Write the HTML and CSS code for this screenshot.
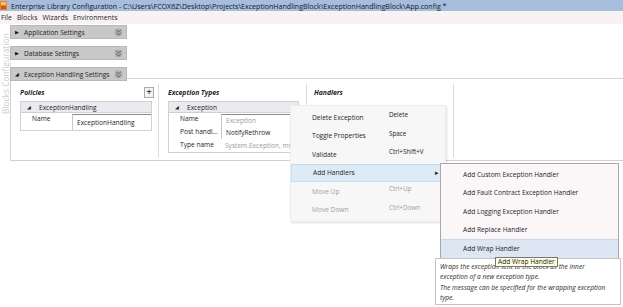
FILE: index.html
```html
<!DOCTYPE html>
<html lang="en">
<head>
    <meta charset="UTF-8">
    <title>Enterprise Library Configuration</title>
    <link rel="stylesheet" href="styles.css">
</head>
<body>

<div class="window">
    <div class="titlebar">
        <svg class="app-icon" width="7" height="9" viewBox="0 0 7 9">
            <rect x="0" y="0" width="7" height="9" fill="#e8862a"/>
            <rect x="1" y="1" width="5" height="3" fill="#f6c06a"/>
            <rect x="1" y="5" width="5" height="3" fill="#c9561c"/>
        </svg>
        <span class="title">Enterprise Library Configuration - C:\Users\FCOX6Z\Desktop\Projects\ExceptionHandlingBlock\ExceptionHandlingBlock\App.config *</span>
    </div>

    <div class="menubar">
        <span>File</span>
        <span>Blocks</span>
        <span>Wizards</span>
        <span>Environments</span>
    </div>

    <div class="workspace">
        <div class="sidebar"><span>Blocks Configuration</span></div>

        <div class="blocks">
            <div class="block-header">
                <span class="tri">&#9654;</span>
                <span class="block-name">Application Settings</span>
                <svg class="chev" width="9" height="9" viewBox="0 0 9 9">
                    <circle cx="4.5" cy="4.5" r="4.2" fill="#b4b4b4"/>
                    <path d="M2 1.8 L4.5 4 L7 1.8 M2 4.8 L4.5 7 L7 4.8" fill="none" stroke="#7a7a7a" stroke-width="1.2"/>
                </svg>
            </div>
            <div class="block-header">
                <span class="tri">&#9654;</span>
                <span class="block-name">Database Settings</span>
                <svg class="chev" width="9" height="9" viewBox="0 0 9 9">
                    <circle cx="4.5" cy="4.5" r="4.2" fill="#b4b4b4"/>
                    <path d="M2 1.8 L4.5 4 L7 1.8 M2 4.8 L4.5 7 L7 4.8" fill="none" stroke="#7a7a7a" stroke-width="1.2"/>
                </svg>
            </div>
            <div class="block-header open">
                <span class="tri">&#9698;</span>
                <span class="block-name">Exception Handling Settings</span>
                <svg class="chev" width="9" height="9" viewBox="0 0 9 9">
                    <circle cx="4.5" cy="4.5" r="4.2" fill="#b4b4b4"/>
                    <path d="M2 1.8 L4.5 4 L7 1.8 M2 4.8 L4.5 7 L7 4.8" fill="none" stroke="#7a7a7a" stroke-width="1.2"/>
                </svg>
            </div>

            <div class="block-panel">
                <div class="column policies">
                    <div class="column-head">
                        <span class="column-title">Policies</span>
                        <span class="add-btn">+</span>
                    </div>
                    <div class="element">
                        <div class="element-head"><span class="tri-small">&#9698;</span>ExceptionHandling</div>
                        <div class="prop">
                            <span class="prop-label">Name</span>
                            <span class="prop-value edit">ExceptionHandling</span>
                        </div>
                    </div>
                </div>

                <div class="column types">
                    <div class="column-head">
                        <span class="column-title">Exception Types</span>
                    </div>
                    <div class="element">
                        <div class="element-head"><span class="tri-small">&#9698;</span>Exception</div>
                        <div class="prop">
                            <span class="prop-label">Name</span>
                            <span class="prop-value edit muted">Exception</span>
                        </div>
                        <div class="prop">
                            <span class="prop-label">Post handl...</span>
                            <span class="prop-value combo">NotifyRethrow</span>
                        </div>
                        <div class="prop">
                            <span class="prop-label">Type name</span>
                            <span class="prop-value muted">System.Exception, ms</span>
                        </div>
                    </div>
                </div>

                <div class="column handlers">
                    <div class="column-head">
                        <span class="column-title">Handlers</span>
                    </div>
                </div>
            </div>
        </div>
    </div>

    <div class="context-menu">
        <div class="menu-item"><span class="label">Delete Exception</span><span class="key">Delete</span></div>
        <div class="menu-item"><span class="label">Toggle Properties</span><span class="key">Space</span></div>
        <div class="menu-item"><span class="label">Validate</span><span class="key">Ctrl+Shift+V</span></div>
        <div class="menu-item active"><span class="label">Add Handlers</span><span class="arrow">&#9656;</span></div>
        <div class="menu-item disabled"><span class="label">Move Up</span><span class="key">Ctrl+Up</span></div>
        <div class="menu-item disabled"><span class="label">Move Down</span><span class="key">Ctrl+Down</span></div>
    </div>

    <div class="submenu">
        <div class="sub-item">Add Custom Exception Handler</div>
        <div class="sub-item">Add Fault Contract Exception Handler</div>
        <div class="sub-item">Add Logging Exception Handler</div>
        <div class="sub-item">Add Replace Handler</div>
        <div class="sub-item active">Add Wrap Handler</div>
    </div>

    <div class="description">
        Wraps the exception sent to the block as the inner<br>
        exception of a new exception type.<br>
        The message can be specified for the wrapping exception<br>
        type.
    </div>

    <div class="tooltip">Add Wrap Handler</div>
</div>

</body>
</html>
```

FILE: styles.css
```css
body {
    margin: 0;
    padding: 0;
    font-family: "Open Sans", "Noto Sans", sans-serif;
    font-size: 6.6px;
    color: #1e1e1e;
    background-color: white;
}
.window {
    position: relative;
    width: 623px;
    height: 307px;
    overflow: hidden;
}

/* title and menu */
.titlebar {
    height: 11px;
    background-color: #a6bddb;
    display: flex;
    align-items: center;
    gap: 4px;
    font-size: 7.1px;
    color: #14182a;
    white-space: nowrap;
}
.app-icon {
    flex: none;
}
.menubar {
    height: 13px;
    background-color: #f8f2f5;
    display: flex;
    align-items: center;
    gap: 5px;
    padding-left: 1px;
    font-size: 6.9px;
}

/* left strip + blocks */
.workspace {
    display: flex;
}
.sidebar {
    width: 10px;
    flex: none;
    display: flex;
    justify-content: center;
    padding-top: 2px;
}
.sidebar span {
    writing-mode: vertical-rl;
    transform: rotate(180deg);
    font-size: 8.4px;
    color: #cdcdcd;
    white-space: nowrap;
    height: 88px;
}
.blocks {
    flex: 1;
    padding-top: 1px;
}
.block-header {
    width: 117px;
    height: 14px;
    box-sizing: border-box;
    background-color: #c8c8c8;
    border: 1px solid #b8b8b8;
    display: flex;
    align-items: center;
    padding: 0 3px 0 4px;
    margin-bottom: 7px;
    white-space: nowrap;
}
.block-header.open {
    margin-bottom: 0;
}
.tri {
    font-size: 5px;
    width: 9px;
    color: #111;
}
.block-name {
    flex: 1;
    font-size: 6.6px;
}
.chev {
    flex: none;
}

/* expanded block */
.block-panel {
    height: 80px;
    box-sizing: border-box;
    border-left: 1px solid #d0d0d0;
    border-bottom: 1px solid #d0d0d0;
    display: flex;
    position: relative;
}
.block-panel::before {
    content: "";
    position: absolute;
    left: 116px;
    right: 0;
    top: -3px;
    border-top: 1px solid #d4d4d4;
}
.column {
    box-sizing: border-box;
    width: 148px;
    border-right: 1px solid #dcdcdc;
    margin: 3px 0 2px;
    padding: 0 7px 0 9px;
}
.column-head {
    height: 15px;
    display: flex;
    align-items: center;
    justify-content: space-between;
    margin-top: 1px;
}
.column-title {
    font-weight: bold;
    font-style: italic;
    font-size: 6.8px;
}
.add-btn {
    width: 8px;
    height: 9px;
    border: 1px solid #aaa;
    background-color: #f2f2f2;
    font-size: 9px;
    line-height: 8px;
    text-align: center;
    font-weight: bold;
    color: #444;
    margin-right: -3px;
}
.element {
    margin-top: 1px;
    border: 1px solid #cfcfd6;
    width: 132px;
    box-sizing: border-box;
}
.element-head {
    height: 10px;
    background-color: #ebebef;
    border-bottom: 1px solid #cfcfd6;
    display: flex;
    align-items: center;
    padding-left: 6px;
}
.tri-small {
    font-size: 5px;
    width: 12px;
}
.prop {
    display: flex;
    height: 13px;
}
.policies .prop {
    height: 17px;
}
.prop-label {
    width: 40px;
    padding-left: 11px;
    padding-top: 1px;
    flex: none;
    box-sizing: border-box;
}
.policies .prop-label {
    width: 51px;
}
.types .prop-label {
    width: 52px;
}
.prop-value {
    flex: 1;
    padding-left: 4px;
    display: flex;
    align-items: center;
    white-space: nowrap;
    overflow: hidden;
}
.prop-value.edit {
    border-top: 1px solid #8a8a8a;
    border-left: 1px solid #c8c8c8;
    margin-top: 1px;
}
.prop-value.combo {
    border-left: 1px solid #c8c8c8;
    background-color: white;
}
.muted {
    color: #9a9a9a;
}
.types .element {
    width: 131px;
}
.handlers {
    width: 147px;
    padding-left: 7px;
}

/* context menu */
.context-menu {
    position: absolute;
    left: 290px;
    top: 105px;
    width: 156px;
    box-sizing: border-box;
    padding: 2px 0;
    background-color: #f7f7f8;
    border: 1px solid #ececec;
    box-shadow: 1px 1px 2px rgba(0, 0, 0, 0.12);
}
.menu-item {
    height: 18.5px;
    display: flex;
    align-items: center;
    padding-left: 21px;
    box-sizing: border-box;
}
.menu-item .label {
    width: 77px;
}
.menu-item .key {
    padding-bottom: 5px;
    font-size: 6.3px;
}
.menu-item .arrow {
    margin-left: 45px;
    font-size: 7px;
}
.menu-item.active {
    background-color: #ddebf7;
    border: 1px solid #c5def2;
}
.menu-item.disabled {
    color: #a0a0a0;
}

/* submenu */
.submenu {
    position: absolute;
    left: 440px;
    top: 163px;
    width: 179px;
    box-sizing: border-box;
    background-color: #fbf7f9;
    border: 1px solid #a8a8a8;
    padding: 1px 0 4px;
}
.sub-item {
    height: 18.5px;
    display: flex;
    align-items: center;
    padding-left: 22px;
}
.sub-item.active {
    background-color: #dce7f3;
    border-top: 1px solid #c9d9ea;
    border-bottom: 1px solid #c9d9ea;
    height: 17.5px;
}

.description {
    position: absolute;
    left: 435px;
    top: 258px;
    width: 186px;
    height: 47px;
    box-sizing: border-box;
    border: 1px solid #c4c4c4;
    background-color: white;
    padding: 3px 0 0 4px;
    font-style: italic;
    font-size: 6.6px;
    line-height: 10.3px;
    color: #2a2a2a;
    white-space: nowrap;
    overflow: hidden;
}
.tooltip {
    position: absolute;
    left: 495px;
    top: 257px;
    height: 10px;
    box-sizing: border-box;
    padding: 0 2px;
    background-color: #ffffe1;
    border: 1px solid #767676;
    font-size: 6.6px;
    line-height: 8px;
    color: #222;
}
```
